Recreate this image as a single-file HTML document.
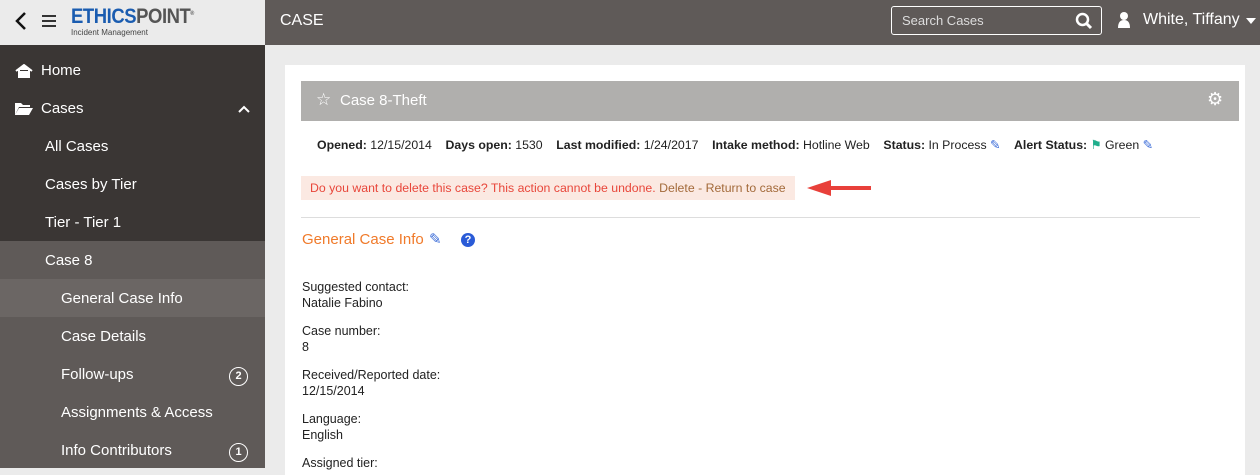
<!DOCTYPE html>
<html><head><style>
*{margin:0;padding:0;box-sizing:border-box}
body{width:1260px;height:468px;overflow:hidden;background:#ebebeb;font-family:"Liberation Sans",sans-serif;position:relative;font-size:13px}
.abs{position:absolute}
#logo{left:0;top:0;width:265px;height:45px;background:#ebebeb}
#top{left:265px;top:0;width:995px;height:45px;background:#5f5a58;color:#fff}
#side{left:0;top:45px;width:265px;height:423px;background:#3a3634}
.row{position:absolute;left:0;width:265px;height:38px;line-height:38px;color:#fff;font-size:15px}
#card{left:285px;top:65px;width:960px;height:410px;background:#fff}
.lbl{font-weight:bold}
</style></head><body>
<div id="logo" class="abs">
 <svg class="abs" style="left:14px;top:11px" width="14" height="20"><path d="M11 2 L3 10 L11 18" stroke="#111" stroke-width="2.5" fill="none"/></svg>
 <div class="abs" style="left:42px;top:15px;width:14px;height:2px;background:#333;box-shadow:0 5px 0 #333,0 10px 0 #333"></div>
 <div class="abs" style="left:71px;top:5px;font-size:21px;font-weight:bold;letter-spacing:-0.5px;transform:scaleX(0.88);transform-origin:left"><span style="color:#1a5cb0">ETHICS</span><span style="color:#555">POINT</span><sup style="font-size:6px;color:#555">®</sup></div>
 <div class="abs" style="left:71px;top:28px;font-size:8px;color:#444">Incident Management</div>
</div>
<div id="top" class="abs">
 <div class="abs" style="left:15px;top:12px;font-size:16px">CASE</div>
 <div class="abs" style="left:626px;top:6px;width:211px;height:29px;border:1px solid #fff;border-radius:3px">
  <span class="abs" style="left:10px;top:6px;font-size:13px;color:#ddd">Search Cases</span>
  <svg class="abs" style="left:183px;top:5px" width="18" height="18"><circle cx="7.5" cy="7.5" r="5.5" stroke="#fff" stroke-width="2.5" fill="none"/><path d="M11.5 11.5 L16 16" stroke="#fff" stroke-width="3"/></svg>
 </div>
 <svg class="abs" style="left:852px;top:11px" width="14" height="18"><circle cx="7" cy="5" r="4" fill="#fff"/><path d="M1 17 Q1 9 7 9 Q13 9 13 17Z" fill="#fff"/></svg>
 <div class="abs" style="left:878px;top:11px;font-size:16px">White, Tiffany</div>
 <div class="abs" style="left:981px;top:18px;border-left:5px solid transparent;border-right:5px solid transparent;border-top:6px solid #fff"></div>
</div>
<div id="side" class="abs">
 <div class="row" style="top:7px;padding-left:41px">Home</div>
 <svg class="abs" style="left:15px;top:19px" width="18" height="14"><path d="M1 7 L9 1 L17 7 M4 6 V13 H8 V9 H10 V13 H14 V6" stroke="#fff" stroke-width="2" fill="#fff"/></svg>
 <div class="row" style="top:45px;padding-left:41px">Cases</div>
 <svg class="abs" style="left:14px;top:57px" width="20" height="14"><path d="M1 1 H7 L9 3 H16 V5 H5 L1 13Z M5 6 H19 L15 13 H1Z" fill="#fff"/></svg>
 <svg class="abs" style="left:238px;top:60px" width="12" height="8"><path d="M1 7 L6 2 L11 7" stroke="#fff" stroke-width="2" fill="none"/></svg>
 <div class="row" style="top:83px;padding-left:45px">All Cases</div>
 <div class="row" style="top:121px;padding-left:45px">Cases by Tier</div>
 <div class="row" style="top:159px;padding-left:45px">Tier - Tier 1</div>
 <div class="abs" style="left:0;top:196px;width:265px;height:227px;background:#5f5a58"></div>
 <div class="row" style="top:197px;padding-left:45px">Case 8</div>
 <div class="abs" style="left:0;top:234px;width:265px;height:38px;background:#6b6664"></div>
 <div class="row" style="top:235px;padding-left:61px">General Case Info</div>
 <div class="row" style="top:273px;padding-left:61px">Case Details</div>
 <div class="row" style="top:311px;padding-left:61px">Follow-ups</div>
 <div class="abs" style="left:229px;top:322px;width:19px;height:19px;border:1.5px solid #fff;border-radius:50%;color:#fff;font-size:11px;font-weight:bold;text-align:center;line-height:16px">2</div>
 <div class="row" style="top:349px;padding-left:61px">Assignments &amp; Access</div>
 <div class="row" style="top:387px;padding-left:61px">Info Contributors</div>
 <div class="abs" style="left:229px;top:398px;width:19px;height:19px;border:1.5px solid #fff;border-radius:50%;color:#fff;font-size:11px;font-weight:bold;text-align:center;line-height:16px">1</div>
</div>
<div id="card" class="abs">
 <div class="abs" style="left:16px;top:16px;width:938px;height:40px;background:#b0afad;color:#fff">
  <span class="abs" style="left:15px;top:9px;font-size:17px">☆</span>
  <span class="abs" style="left:39px;top:11px;font-size:15px">Case 8-Theft</span>
  <span class="abs" style="left:906px;top:8px;font-size:18px">⚙</span>
 </div>
 <div class="abs" style="left:32px;top:73px;font-size:12.3px;color:#222;white-space:nowrap">
  <span class="lbl">Opened:</span> 12/15/2014&nbsp;&nbsp;&nbsp;&nbsp;<span class="lbl">Days open:</span> 1530&nbsp;&nbsp;&nbsp;&nbsp;<span class="lbl">Last modified:</span> 1/24/2017&nbsp;&nbsp;&nbsp;&nbsp;<span class="lbl">Intake method:</span> Hotline Web&nbsp;&nbsp;&nbsp;&nbsp;<span class="lbl">Status:</span> In Process <span style="color:#3a6bd8">✎</span>&nbsp;&nbsp;&nbsp;&nbsp;<span class="lbl">Alert Status:</span> <span style="color:#1fae8c">⚑</span> Green <span style="color:#3a6bd8">✎</span>
 </div>
 <div class="abs" style="left:16px;top:111px;width:494px;height:24px;background:#fbe9e2;font-size:12.3px;line-height:24px;padding-left:9px;color:#e8463a;white-space:nowrap">Do you want to delete this case? This action cannot be undone. <span style="color:#a36a3a">Delete - Return to case</span></div>
 <svg class="abs" style="left:522px;top:113px" width="66" height="20"><path d="M0 10 L24 2 L24 8 L64 8 L64 12 L24 12 L24 18Z" fill="#e8403a"/></svg>
 <div class="abs" style="left:16px;top:152px;width:899px;height:1px;background:#ddd"></div>
 <div class="abs" style="left:17px;top:166px;font-size:15px;color:#f07a2a">General Case Info</div>
 <span class="abs" style="left:144px;top:165px;font-size:15px;color:#3a6bd8">✎</span>
 <div class="abs" style="left:176px;top:168px;width:14px;height:14px;border-radius:50%;background:#2a5bd7;color:#fff;font-size:11px;font-weight:bold;text-align:center;line-height:14px">?</div>
 <div class="abs" style="left:17px;top:214px;font-size:12.5px;color:#222;line-height:16px">
  <div>Suggested contact:</div><div>Natalie Fabino</div>
  <div style="margin-top:12px">Case number:</div><div>8</div>
  <div style="margin-top:12px">Received/Reported date:</div><div>12/15/2014</div>
  <div style="margin-top:12px">Language:</div><div>English</div>
  <div style="margin-top:12px">Assigned tier:</div>
 </div>
</div>
</body></html>
